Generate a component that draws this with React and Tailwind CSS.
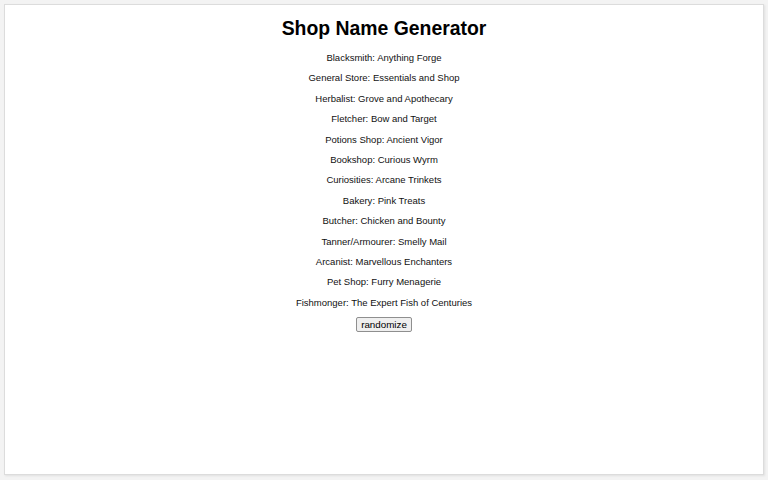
import React, { useState } from "react";

const SHOPS = [
  ["Blacksmith", "Anything Forge"],
  ["General Store", "Essentials and Shop"],
  ["Herbalist", "Grove and Apothecary"],
  ["Fletcher", "Bow and Target"],
  ["Potions Shop", "Ancient Vigor"],
  ["Bookshop", "Curious Wyrm"],
  ["Curiosities", "Arcane Trinkets"],
  ["Bakery", "Pink Treats"],
  ["Butcher", "Chicken and Bounty"],
  ["Tanner/Armourer", "Smelly Mail"],
  ["Arcanist", "Marvellous Enchanters"],
  ["Pet Shop", "Furry Menagerie"],
  ["Fishmonger", "The Expert Fish of Centuries"],
];

export default function App() {
  const [shops] = useState(SHOPS);
  return (
    <div className="w-[768px] h-[480px] bg-[#f3f3f3] pt-[4px] pl-[4px] font-['Liberation_Sans',Arial,sans-serif]">
      <div className="w-[760px] h-[471px] bg-white border border-[#dcdcdc] shadow-[1px_1px_2px_rgba(0,0,0,0.08)] flex flex-col items-center text-black">
        <h1 className="mt-[11px] text-[19.4px] leading-[24px] font-bold">Shop Name Generator</h1>
        <div className="mt-[8px] flex flex-col items-center">
          {shops.map(([kind, name]) => (
            <p key={kind} className="text-[9.5px] leading-[20.4px] text-[#111]">
              {kind}: {name}
            </p>
          ))}
        </div>
        <button className="mt-[4px] h-[15px] px-[4px] text-[9.8px] leading-[13px] text-black bg-[#efefef] border border-[#8f8f8f] rounded-[2px]">
          randomize
        </button>
      </div>
    </div>
  );
}
